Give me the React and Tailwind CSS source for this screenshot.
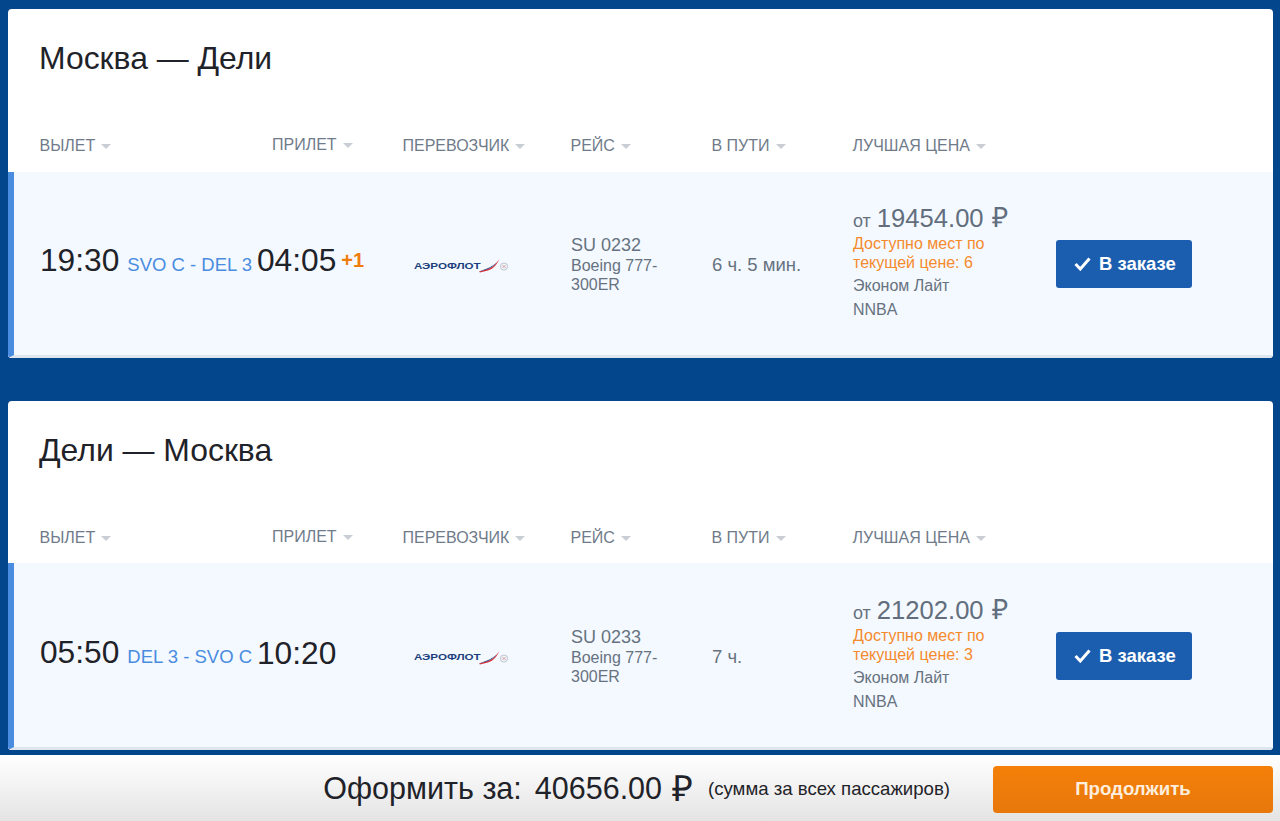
const columns = [
  { label: "ВЫЛЕТ", width: "w-[232.5px]", offset: "" },
  { label: "ПРИЛЕТ", width: "w-[130.5px]", offset: "-translate-y-px" },
  { label: "ПЕРЕВОЗЧИК", width: "w-[168px]", offset: "" },
  { label: "РЕЙС", width: "w-[141px]", offset: "" },
  { label: "В ПУТИ", width: "w-[141px]", offset: "" },
  { label: "ЛУЧШАЯ ЦЕНА", width: "w-[203px]", offset: "" },
];

const flights = [
  {
    title: "Москва — Дели",
    depart: "19:30",
    route: "SVO C - DEL 3",
    arrive: "04:05",
    plus: "+1",
    flight: "SU 0232",
    duration: "6 ч. 5 мин.",
    price: "19454.00",
    seats: 6,
    headerClass: "h-[45px] pb-[7px]",
  },
  {
    title: "Дели — Москва",
    depart: "05:50",
    route: "DEL 3 - SVO C",
    arrive: "10:20",
    plus: "",
    flight: "SU 0233",
    duration: "7 ч.",
    price: "21202.00",
    seats: 3,
    headerClass: "h-[44px] pb-[6px]",
  },
];

const AeroflotLogo = () => (
  <div className="flex items-center">
    <span className="inline-block w-[66px] origin-left scale-x-[1.29] text-[9px] font-bold leading-none text-[#1c3f7c]">
      АЭРОФЛОТ
    </span>
    <svg width="30" height="14" viewBox="0 0 30 14" className="-ml-[1px]">
      <path d="M0 12.5 L10 9.5 C14 8 17 5 20 0.5 C18 6 14 10 9 11.5 L1 13.5 Z" fill="#d8343c" />
      <path d="M0 12.5 L8 9.5 C12 8 15 6 18 3 C15 7 11 9.5 6 11 Z" fill="#24478a" />
      <circle cx="25" cy="7.5" r="3.6" fill="#eef2f7" stroke="#a9b3c0" strokeWidth="0.7" />
      <path d="M23.5 6.5 L26.5 8.5 M26.5 6.5 L23.5 8.5" stroke="#d08a8a" strokeWidth="0.7" />
    </svg>
  </div>
);

const FlightCard = ({ data }) => (
  <section className="h-[349px] bg-white rounded-sm overflow-hidden flex flex-col">
    <h2 className="pl-[31px] pt-[28px] h-[118px] text-[31.9px] leading-[42px] text-[#1f2329]">
      {data.title}
    </h2>

    {/* Column headers */}
    <div className={`flex items-center pl-[31.5px] text-[16px] text-[#6f7b8a] ${data.headerClass}`}>
      {columns.map((col) => (
        <div key={col.label} className={`${col.width} ${col.offset} flex items-center`}>
          {col.label}
          <span className="ml-[6px] mt-[1px] border-x-[5.5px] border-t-[5px] border-x-transparent border-t-[#c9ced4]" />
        </div>
      ))}
    </div>

    {/* Flight row */}
    <div className="flex-1 flex items-center bg-[#f4f9ff] border-l-[6px] border-l-[#4a8cdf] border-b-[3px] border-b-[#dde5ee] pl-[26px]">
      <div className="w-[232px] flex items-baseline mt-[-3px] whitespace-nowrap">
        <span className="text-[31.7px] leading-none text-[#1f2329]">{data.depart}</span>
        <span className="ml-[8px] text-[18.5px] text-[#4a8cdf]">{data.route}</span>
      </div>
      <div className="w-[131px] flex items-baseline mt-[-3px]">
        <span className="-ml-[15px] text-[31.7px] leading-none text-[#1f2329]">{data.arrive}</span>
        <span className="ml-[5px] -translate-y-[4px] text-[20px] font-bold text-[#f07d0a]">{data.plus}</span>
      </div>
      <div className="w-[168px] pl-[11px] mt-[5px]">
        <AeroflotLogo />
      </div>
      <div className="w-[141px] mt-[1px] text-[#677280]">
        <div className="text-[18px] leading-[22px]">{data.flight}</div>
        <div className="w-[110px] text-[16px] leading-[19px]">Boeing 777-300ER</div>
      </div>
      <div className="w-[141px] mt-[3px] text-[18.5px] text-[#677280]">{data.duration}</div>
      <div className="w-[203px] mt-[-1px] text-[#677280]">
        <div className="flex items-baseline leading-none">
          <span className="text-[18px]">от</span>
          <span className="ml-[6px] text-[25.6px] text-[#626e7d]">{data.price}</span>
          <span className="ml-[8px] text-[28px] text-[#626e7d]">₽</span>
        </div>
        <div className="mt-[2px] w-[150px] text-[16px] leading-[19px] text-[#f58a2c]">
          {`Доступно мест по текущей цене: ${data.seats}`}
        </div>
        <div className="mt-[2px] text-[16px] leading-[24px]">Эконом Лайт</div>
        <div className="text-[16px] leading-[24px]">NNBA</div>
      </div>
      <button className="w-[136px] h-[48px] mt-[1px] pl-[2px] flex items-center justify-center gap-[8px] rounded-[3px] bg-[#1b5eb0] text-[18.5px] font-bold text-white">
        <svg width="17" height="14" viewBox="0 0 17 14" fill="none">
          <path d="M1.5 7 L6.3 12 L15.5 1.5" stroke="white" strokeWidth="3" />
        </svg>
        В заказе
      </button>
    </div>
  </section>
);

const App = () => (
  <div className="relative h-[821px] overflow-hidden bg-[#03468c] font-['Liberation_Sans',Arial,sans-serif]">
    <div className="flex flex-col gap-[43px] pt-[9px] pl-[8px] pr-[7px]">
      {flights.map((f) => (
        <FlightCard key={f.title} data={f} />
      ))}
    </div>

    {/* Sticky checkout bar */}
    <div className="absolute bottom-0 inset-x-0 h-[66px] flex items-center justify-end pr-[7px] pt-[2px] bg-gradient-to-b from-white to-[#e4e4e4]">
      <span className="text-[30.5px] text-[#1f2329]">Оформить за:</span>
      <span className="ml-[13px] text-[30.5px] text-[#1f2329]">40656.00</span>
      <span className="ml-[10px] text-[36px] leading-none text-[#1f2329]">₽</span>
      <span className="ml-[15px] text-[18.6px] text-[#1f2329]">(сумма за всех пассажиров)</span>
      <button className="ml-[43px] w-[280px] h-[47px] rounded-[4px] bg-gradient-to-b from-[#f48009] to-[#e8780c] text-[18.6px] font-bold text-[#fdeedd]">
        Продолжить
      </button>
    </div>
  </div>
);

export default App;
